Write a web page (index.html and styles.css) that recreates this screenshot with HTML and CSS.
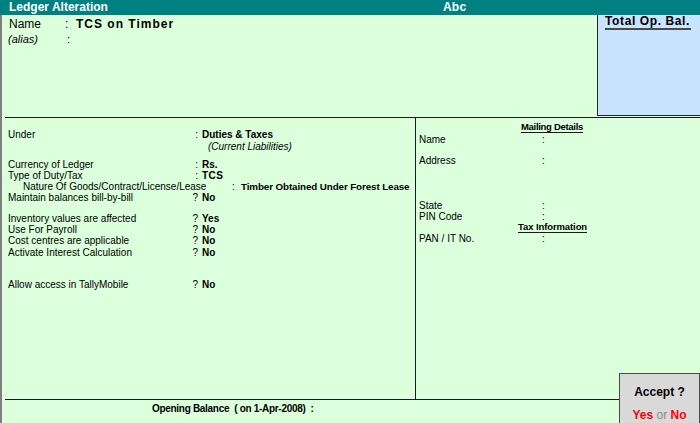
FILE: index.html
```html
<!DOCTYPE html>
<html>
<head>
<meta charset="utf-8">
<link rel="stylesheet" href="styles.css">
</head>
<body>
<div class="screen">
  <div class="titlebar">
    <span class="title">Ledger Alteration</span>
    <span class="company">Abc</span>
  </div>
  <div class="main">
    <div class="top">
      <div class="namearea">
        <div class="namerow"><span class="nlabel">Name</span><span class="ncolon">:</span><span class="nvalue">TCS on Timber</span></div>
        <div class="aliasrow"><span class="nlabel alias">(alias)</span><span class="acolon">:</span></div>
      </div>
      <div class="opbal"><span class="opbal-title">Total Op. Bal.</span></div>
    </div>
    <div class="mid">
      <div class="leftcol">
        <div class="row r-under"><span class="lbl">Under</span><span class="sep">:</span><span class="val">Duties &amp; Taxes</span></div>
        <div class="row r-sub"><span class="subval">(Current Liabilities)</span></div>
        <div class="row r-gap7"><span class="lbl">Currency of Ledger</span><span class="sep">:</span><span class="val">Rs.</span></div>
        <div class="row"><span class="lbl">Type of Duty/Tax</span><span class="sep">:</span><span class="val tcs">TCS</span></div>
        <div class="row nature"><span class="nlbl">Nature Of Goods/Contract/License/Lease</span><span class="nsep">:</span><span class="nval">Timber Obtained Under Forest Lease</span></div>
        <div class="row"><span class="lbl">Maintain balances bill-by-bill</span><span class="sep">?</span><span class="val">No</span></div>
        <div class="row r-gap10"><span class="lbl">Inventory values are affected</span><span class="sep">?</span><span class="val">Yes</span></div>
        <div class="row"><span class="lbl">Use For Payroll</span><span class="sep">?</span><span class="val">No</span></div>
        <div class="row"><span class="lbl">Cost centres are applicable</span><span class="sep">?</span><span class="val">No</span></div>
        <div class="row r-gap1"><span class="lbl">Activate Interest Calculation</span><span class="sep">?</span><span class="val">No</span></div>
        <div class="row r-gap22"><span class="lbl">Allow access in TallyMobile</span><span class="sep">?</span><span class="val">No</span></div>
      </div>
      <div class="rightcol">
        <div class="heading h-mail"><span class="ul">Mailing Details</span></div>
        <div class="mrow m-name"><span class="mlbl">Name</span><span class="msep">:</span></div>
        <div class="mrow m-addr"><span class="mlbl">Address</span><span class="msep">:</span></div>
        <div class="mrow m-state"><span class="mlbl">State</span><span class="msep">:</span></div>
        <div class="mrow m-pin"><span class="mlbl">PIN Code</span><span class="msep">:</span></div>
        <div class="heading h-tax"><span class="ul">Tax Information</span></div>
        <div class="mrow m-pan"><span class="mlbl">PAN / IT No.</span><span class="msep">:</span></div>
      </div>
    </div>
    <div class="bottom">
      <span class="openbal">Opening Balance&nbsp; ( on 1-Apr-2008)&nbsp; :</span>
    </div>
  </div>
  <div class="accept">
    <div class="accept-q">Accept ?</div>
    <div class="accept-a"><span class="yn">Yes</span> <span class="or">or</span> <span class="yn">No</span></div>
  </div>
</div>
</body>
</html>
```
FILE: styles.css
```css
html, body {
  margin: 0;
  padding: 0;
}
body {
  font-family: "Liberation Sans", Arial, sans-serif;
  color: #000;
  background: #dcffdc;
}
.screen {
  position: relative;
  width: 700px;
  height: 423px;
  overflow: hidden;
  background: #dcffdc;
}
.titlebar {
  height: 15px;
  background: #008080;
  color: #fff;
  font-weight: bold;
  font-size: 12px;
  line-height: 15px;
  display: flex;
}
.title {
  padding-left: 9px;
  width: 434px;
}
.company {
  letter-spacing: 0.2px;
}
.main {
  border-left: 2px solid #7f7f7f;
  height: 408px;
  display: flex;
  flex-direction: column;
}
.top {
  height: 103px;
  display: flex;
  border-bottom: 1px solid #1a1a1a;
  margin-left: 3px;
}
.namearea {
  flex: 1;
  padding-top: 2px;
  margin-left: -3px;
}
.namerow {
  display: flex;
  height: 15px;
  line-height: 15px;
  align-items: baseline;
}
.nlabel {
  font-size: 12px;
  padding-left: 7px;
  width: 56px;
}
.ncolon {
  font-size: 12px;
  width: 11px;
}
.nvalue {
  font-size: 12px;
  font-weight: bold;
  letter-spacing: 1px;
}
.aliasrow {
  display: flex;
  height: 14px;
  line-height: 14px;
  align-items: baseline;
}
.alias {
  font-style: italic;
  font-size: 11px;
  padding-left: 6px;
  width: 59px;
}
.acolon {
  font-size: 11px;
}
.opbal {
  width: 103px;
  background: #c8e4fe;
  border-left: 1px solid #262626;
  margin-bottom: 1px;
  border-bottom: 1px solid #262626;
  display: flex;
  justify-content: center;
  align-items: flex-start;
  padding-top: 1px;
  box-sizing: border-box;
}
.opbal-title {
  display: block;
  font-size: 12px;
  font-weight: bold;
  letter-spacing: 0.6px;
  line-height: 11px;
  padding: 0 1px 1px 0;
  border-bottom: 2px solid #4a4a4a;
  margin-left: -2px;
}
.mid {
  height: 283px;
  display: flex;
  border-bottom: 1px solid #1a1a1a;
  margin-left: 3px;
}
.leftcol {
  width: 414px;
  border-right: 1px solid #1a1a1a;
  padding-top: 11px;
  box-sizing: border-box;
  font-size: 10px;
  margin-left: -3px;
}
.row {
  display: flex;
  height: 11px;
  line-height: 11px;
  white-space: nowrap;
}
.lbl {
  width: 178px;
  padding-left: 6px;
}
.sep {
  width: 12px;
  text-align: right;
}
.val {
  font-weight: bold;
  padding-left: 4px;
}
.tcs {
  letter-spacing: 0.5px;
}
.r-under { height: 12px; }
.subval {
  font-style: italic;
  padding-left: 206px;
}
.r-gap7 { margin-top: 7px; }
.r-gap10 { margin-top: 10px; }
.r-gap1 { margin-top: 1px; }
.r-gap22 { margin-top: 21px; }
.nlbl {
  padding-left: 21px;
  width: 209px;
}
.nsep {
  width: 9px;
}
.nval {
  font-weight: bold;
  font-size: 9.8px;
  letter-spacing: -0.1px;
}
.rightcol {
  flex: 1;
  font-size: 10px;
  padding-top: 3px;
}
.heading {
  height: 12px;
  line-height: 11px;
  font-weight: bold;
  font-size: 9.5px;
}
.ul {
  display: inline-block;
  border-bottom: 1px solid #1a1a1a;
  line-height: 10px;
}
.h-mail { padding-left: 105px; letter-spacing: -0.3px; }
.h-tax { padding-left: 102px; letter-spacing: -0.1px; }
.mrow {
  display: flex;
  height: 11px;
  line-height: 11px;
}
.mlbl {
  padding-left: 3px;
  width: 123px;
}
.m-name { margin-top: 1px; }
.m-addr { margin-top: 10px; }
.m-state { margin-top: 34px; }
.m-pin { height: 10px; line-height: 11px; }
.bottom {
  height: 20px;
  font-size: 10px;
  font-weight: bold;
  padding-top: 3px;
}
.openbal {
  padding-left: 150px;
  letter-spacing: -0.3px;
}
.accept {
  position: absolute;
  left: 619px;
  top: 373px;
  width: 81px;
  height: 50px;
  box-sizing: border-box;
  background: #d9d9d9;
  border: 1px solid #4a4a4a;
  border-bottom: none;
  text-align: center;
  font-size: 12px;
  font-weight: bold;
}
.accept-q {
  padding-top: 11px;
  line-height: 14px;
}
.accept-a {
  padding-top: 9px;
  line-height: 14px;
}
.yn {
  color: #ff0000;
}
.or {
  color: #8c8c8c;
  font-weight: normal;
}
```
